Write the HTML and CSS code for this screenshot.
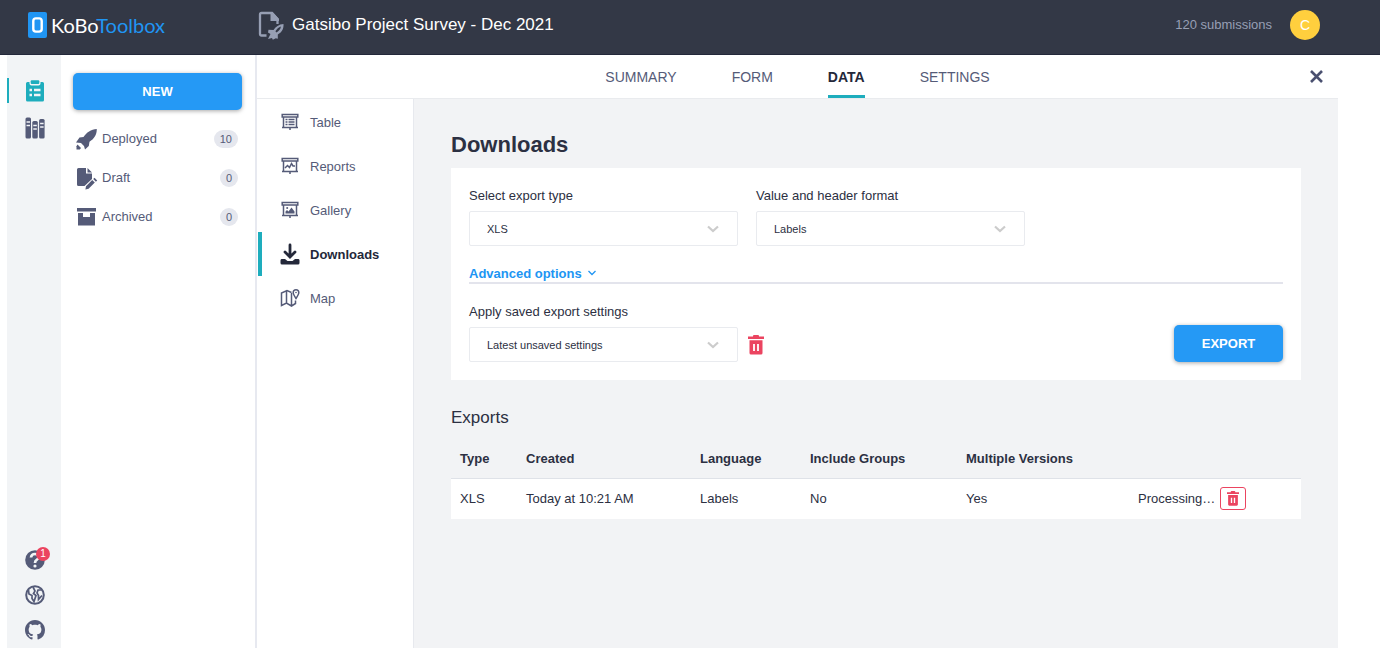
FILE: index.html
```html
<!DOCTYPE html>
<html lang="en">
<head>
    <meta charset="UTF-8">
    <meta name="viewport" content="width=device-width, initial-scale=1.0">
    <title>Gatsibo Project Survey - Dec 2021 | KoBoToolbox</title>
    <link rel="stylesheet" href="styles.css">
</head>
<body>

    <header class="header">
        <a href="#" class="brand">
            <svg width="20" height="28" viewBox="0 0 20 28">
                <rect x="0" y="1" width="19" height="26" rx="2" fill="#2095f3"/>
                <rect x="5.300" y="7.400" width="8.400" height="13.200" rx="2.600" fill="none" stroke="#fff" stroke-width="2.400"/>
            </svg>
            <span class="brand-text">KoBo<span>Toolbox</span></span>
        </a>
        <div class="project">
            <svg width="26" height="30" viewBox="0 0 26 30">
                <path d="M8.500 25.500H3.500Q2 25.500 2 24V4.500Q2 3 3.500 3H14l5.500 6v5" fill="none" stroke="#979fb4" stroke-width="2.300"/>
                <path d="M12.500 2h2l6.500 7v2h-8.500z" fill="#979fb4"/>
                <path d="M25.500 14c-4.500.3-8 2.800-10 6l-5-.2-.5 2.700 2.500 1.500-2.500 5 4-1 .8 1.800 3-1.500 2 .5v-4.300c4-2.200 6-5.500 5.700-10.500z" fill="#979fb4"/>
                <path d="M23 16.500c-2.300.8-4.300 2.500-5.600 4.700l1.200 1.200c2.200-1.300 3.800-3.200 4.400-5.900z" fill="#333846"/>
            </svg>
            <h1>Gatsibo Project Survey - Dec 2021</h1>
        </div>
        <span class="submissions">120 submissions</span>
        <button type="button" class="avatar">C</button>
    </header>

    <div class="layout">
        <nav class="rail">
            <a href="#" class="rail-link active" aria-label="Projects">
                <svg width="20" height="24" viewBox="0 0 20 24">
                    <path d="M2.500 3H4.500v1.500Q4.500 6.500 6.500 6.500h7q2 0 2-2V3h2q1.500 0 1.500 1.500v16.500q0 1.500-1.500 1.500h-15Q1 22.500 1 21V4.500Q1 3 2.500 3z" fill="currentColor"/>
                    <rect x="5.700" y="1.300" width="8.600" height="3.800" rx="1" fill="currentColor"/>
                    <path d="M4.500 11H7M4.500 16H7M9 11h6.500M9 16h6.500" stroke="#f2f4f6" stroke-width="2.300"/>
                </svg>
            </a>
            <a href="#" class="rail-link" aria-label="Library">
                <svg width="20" height="24" viewBox="0 0 20 24">
                    <rect x="0.500" y="1.500" width="5.500" height="21" rx="1.500" fill="currentColor"/>
                    <rect x="7.300" y="5" width="5.500" height="17.500" rx="1.500" fill="currentColor"/>
                    <rect x="14.100" y="3" width="5.500" height="19.500" rx="1.500" fill="currentColor"/>
                    <path d="M1.500 6h3.500M1.500 9.500h3.500M8.300 9.500h3.500M8.300 13h3.500M15.100 7.500h3.500M15.100 11h3.500" stroke="#f2f4f6" stroke-width="1.300"/>
                </svg>
            </a>
            <div class="rail-bottom">
                <button type="button" class="rail-btn" aria-label="Help">
                    <svg width="20" height="20" viewBox="0 0 20 20">
                        <circle cx="10" cy="10" r="9.800" fill="currentColor"/>
                        <path d="M6 7.500Q6.300 4 10 4q3.600 0 3.600 3 0 1.800-1.900 2.900Q10 10.900 10 13" fill="none" stroke="#f2f4f6" stroke-width="2.700"/>
                        <circle cx="10" cy="16" r="1.600" fill="#f2f4f6"/>
                    </svg>
                    <span class="alert-count">1</span>
                </button>
                <a href="#" class="rail-btn" aria-label="Website">
                    <svg width="20" height="20" viewBox="0 0 20 20" fill="none" stroke="currentColor">
                        <circle cx="10" cy="10" r="8.800" stroke-width="2"/>
                        <path d="M3.500 5l.5 4 3 1.500v3l2 3 2-6-2.500-2L10 6 8 2" stroke-width="1.700"/>
                        <path d="M16.500 5h-3.500l-1 3 1.500 2.500v4l3.500-4" stroke-width="1.700"/>
                    </svg>
                </a>
                <a href="#" class="rail-btn" aria-label="GitHub">
                    <svg width="20" height="20" viewBox="0 0 16 16" fill="currentColor">
                        <path d="M8 0C3.580 0 0 3.580 0 8c0 3.540 2.290 6.530 5.470 7.590.4.070.55-.17.55-.38 0-.19-.01-.82-.01-1.490-2.010.37-2.530-.49-2.690-.94-.09-.23-.48-.94-.82-1.130-.28-.15-.68-.52-.01-.53.63-.01 1.080.58 1.230.82.72 1.210 1.870.87 2.330.66.07-.52.28-.87.51-1.070-1.780-.2-3.640-.89-3.640-3.950 0-.87.31-1.590.82-2.150-.08-.2-.36-1.020.08-2.120 0 0 .67-.21 2.200.82.64-.18 1.320-.27 2-.27s1.360.09 2 .27c1.530-1.040 2.200-.82 2.200-.82.44 1.100.16 1.920.08 2.120.51.56.82 1.270.82 2.150 0 3.070-1.870 3.750-3.650 3.950.29.25.54.73.54 1.480 0 1.070-.01 1.930-.01 2.200 0 .21.15.46.55.38A8.010 8.010 0 0 0 16 8c0-4.420-3.580-8-8-8z"/>
                    </svg>
                </a>
            </div>
        </nav>

        <aside class="sidebar">
            <button type="button" class="btn btn-new">NEW</button>
            <ul class="status-list">
                <li>
                    <a href="#">
                        <svg width="22" height="24" viewBox="0 0 22 24" fill="currentColor">
                            <path d="M20.800 2C15 2.300 10.500 5.500 7.500 10L3.500 10.500 0 15.500l5 .5 3 3 1 3.500 3.800-3.500.7-4.300C18 12 20.800 8 20.800 2z"/>
                            <path d="M1.500 17.500l3.500 3.500L3.800 22.500H.5v-3.300z"/>
                        </svg>
                        Deployed
                    </a>
                    <span class="count">10</span>
                </li>
                <li>
                    <a href="#">
                        <svg width="22" height="24" viewBox="0 0 22 24" fill="currentColor">
                            <path d="M2.500 2H10v5.500h6V13l-7.500 7H2.500Q1 20 1 18.500v-15Q1 2 2.500 2z"/>
                            <path d="M11.500 2l4.500 4.500h-4.500z"/>
                            <path d="M10 20.200l6.200-6.200 2.600 2.600-6.200 6.200-3.200.6zM17.200 13l1.300-1.300 2.700 2.700-1.300 1.300z"/>
                        </svg>
                        Draft
                    </a>
                    <span class="count">0</span>
                </li>
                <li>
                    <a href="#">
                        <svg width="22" height="24" viewBox="0 0 22 24" fill="currentColor">
                            <path d="M1 3h19v3.500H1zM2 8h5v4h7V8h5v12.500H2z"/>
                        </svg>
                        Archived
                    </a>
                    <span class="count">0</span>
                </li>
            </ul>
        </aside>

        <main class="main">
            <div class="topbar">
                <nav class="tabs">
                    <a href="#">SUMMARY</a>
                    <a href="#">FORM</a>
                    <a href="#" class="active">DATA</a>
                    <a href="#">SETTINGS</a>
                </nav>
                <button type="button" class="close" aria-label="Close">
                    <svg width="13" height="13" viewBox="0 0 13 13">
                        <path d="M1 1l11 11M12 1L1 12" stroke="currentColor" stroke-width="2.600"/>
                    </svg>
                </button>
            </div>

            <div class="panel">
                <nav class="data-nav">
                    <a href="#">
                        <svg width="20" height="20" viewBox="0 0 20 20" fill="none" stroke="currentColor">
                            <path d="M2.200 2.500h15.600v2.500H2.200zM3.500 5v10.500h13V5M2 15.500h16M10 15.500v2.500" stroke-width="1.500"/>
                            <path d="M5.500 7.500h2M5.500 10h2M5.500 12.500h2M8.500 7.500h6M8.500 10h6M8.500 12.500h6" stroke-width="1.400"/>
                        </svg>
                        Table
                    </a>
                    <a href="#">
                        <svg width="20" height="20" viewBox="0 0 20 20" fill="none" stroke="currentColor">
                            <path d="M2.200 2.500h15.600v2.500H2.200zM3.500 5v10.500h13V5M2 15.500h16M10 15.500v2.500" stroke-width="1.500"/>
                            <path d="M5 12l2.500-2.500 2 2 2-4 1.500 2.500h2" stroke-width="1.500"/>
                        </svg>
                        Reports
                    </a>
                    <a href="#">
                        <svg width="20" height="20" viewBox="0 0 20 20" fill="none" stroke="currentColor">
                            <path d="M2.200 2.500h15.600v2.500H2.200zM3.500 5v10.500h13V5M2 15.500h16M10 15.500v2.500" stroke-width="1.500"/>
                            <path d="M5.500 13.500v-2L7 10l1.500 1.500 3-4 3 4v2z" fill="currentColor" stroke="none"/>
                            <circle cx="7.200" cy="8" r="1" fill="currentColor" stroke="none"/>
                        </svg>
                        Gallery
                    </a>
                    <a href="#" class="active">
                        <svg width="20" height="22" viewBox="0 0 20 22" fill="none" stroke="currentColor">
                            <path d="M10 2v11M5 9l5 5 5-5" stroke-width="2.800" stroke-linecap="round"/>
                            <path d="M1.500 16h3.500l2.500 2h5l2.500-2h3.500Q19.500 16 19.500 17.500v2.500Q19.500 21.500 18 21.500H2Q.5 21.500.5 20v-2.500Q.5 16 1.500 16z" fill="currentColor" stroke="none"/>
                        </svg>
                        Downloads
                    </a>
                    <a href="#">
                        <svg width="20" height="22" viewBox="0 0 20 22" fill="none" stroke="currentColor">
                            <path d="M11.500 5.500L7 3.500 1.500 6v12.500L6.500 16l5 3 4-2.500v-3M6.500 4v12M11.500 6v13" stroke-width="1.500"/>
                            <path d="M16 11.500c-2-3-2.800-4.500-2.800-6a2.800 2.800 0 0 1 5.600 0c0 1.500-.8 3-2.800 6z" stroke-width="1.500"/>
                            <circle cx="16" cy="5.500" r=".8" fill="currentColor" stroke="none"/>
                        </svg>
                        Map
                    </a>
                </nav>

                <section class="content">
                    <h2>Downloads</h2>
                    <form class="export-form">
                        <div class="fields">
                            <div class="field">
                                <label for="exportType">Select export type</label>
                                <div class="select">
                                    <select id="exportType">
                                        <option>XLS</option>
                                        <option>CSV</option>
                                    </select>
                                    <svg width="12" height="8" viewBox="0 0 12 8"><path d="M1 1.500l5 4.500 5-4.500" fill="none" stroke="#ccc" stroke-width="2.200"/></svg>
                                </div>
                            </div>
                            <div class="field">
                                <label for="valueFormat">Value and header format</label>
                                <div class="select">
                                    <select id="valueFormat">
                                        <option>Labels</option>
                                        <option>XML values and headers</option>
                                    </select>
                                    <svg width="12" height="8" viewBox="0 0 12 8"><path d="M1 1.500l5 4.500 5-4.500" fill="none" stroke="#ccc" stroke-width="2.200"/></svg>
                                </div>
                            </div>
                        </div>

                        <div class="advanced">
                            <button type="button">
                                Advanced options
                                <svg width="8" height="6" viewBox="0 0 8 6"><path d="M.5 1L4 4.500 7.500 1" fill="none" stroke="currentColor" stroke-width="1.300"/></svg>
                            </button>
                        </div>

                        <div class="form-bottom">
                            <div class="field">
                                <label for="savedSettings">Apply saved export settings</label>
                                <div class="select">
                                    <select id="savedSettings">
                                        <option>Latest unsaved settings</option>
                                    </select>
                                    <svg width="12" height="8" viewBox="0 0 12 8"><path d="M1 1.500l5 4.500 5-4.500" fill="none" stroke="#ccc" stroke-width="2.200"/></svg>
                                </div>
                            </div>
                            <button type="button" class="trash" aria-label="Delete settings">
                                <svg width="16" height="20" viewBox="0 0 16 20">
                                    <path d="M0 1.500h5V1q0-1 1-1h4q1 0 1 1v.5h5V4H0zM1.500 5.200h13v12.800q0 1.500-1.500 1.500H3q-1.500 0-1.500-1.500z" fill="currentColor"/>
                                    <path d="M6 9v7M10 9v7" stroke="#fff" stroke-width="1.800"/>
                                </svg>
                            </button>
                            <button type="submit" class="btn btn-export">EXPORT</button>
                        </div>
                    </form>

                    <h3>Exports</h3>
                    <table class="exports">
                        <thead>
                            <tr>
                                <th class="col-type">Type</th>
                                <th class="col-created">Created</th>
                                <th class="col-language">Language</th>
                                <th class="col-groups">Include Groups</th>
                                <th class="col-versions">Multiple Versions</th>
                                <th></th>
                            </tr>
                        </thead>
                        <tbody>
                            <tr>
                                <td>XLS</td>
                                <td>Today at 10:21 AM</td>
                                <td>Labels</td>
                                <td>No</td>
                                <td>Yes</td>
                                <td>
                                    <div class="row-actions">
                                        <span>Processing…</span>
                                        <button type="button" aria-label="Delete export">
                                            <svg width="12" height="15" viewBox="0 0 16 20">
                                                <path d="M0 1.500h5V1q0-1 1-1h4q1 0 1 1v.5h5V4H0zM1.500 5.200h13v12.800q0 1.500-1.500 1.500H3q-1.500 0-1.500-1.500z" fill="currentColor"/>
                                                <path d="M6 9v7M10 9v7" stroke="#fff" stroke-width="1.800"/>
                                            </svg>
                                        </button>
                                    </div>
                                </td>
                            </tr>
                        </tbody>
                    </table>
                </section>
            </div>
        </main>
    </div>

</body>
</html>
```

FILE: styles.css
```css
*{
    margin: 0;
    padding: 0;
    box-sizing: border-box;
}
body {
    display: flex;
    flex-direction: column;
    min-height: 100vh;
    font-family: "Liberation Sans", Arial, sans-serif;
    font-size: 13px;
    color: #2c3042;
    background-color: #fff;
}
button, select {
    font-family: inherit;
    cursor: pointer;
}
a {
    color: inherit;
    text-decoration: none;
}
svg {
    flex-shrink: 0;
}

/* header */
.header {
    display: flex;
    align-items: center;
    height: 55px;
    padding: 0 60px 5px 28px;
    background-color: #333846;
    border-bottom: 1px solid #23283a;
}
.brand {
    display: flex;
    align-items: center;
    gap: 3px;
    width: 230px;
}
.brand-text {
    font-family: Lato, "Open Sans", sans-serif;
    font-size: 20px;
    color: #fff;
}
.brand-text span {
    color: #2095f3;
}
.project {
    display: flex;
    align-items: center;
    gap: 8px;
    flex: 1;
    color: #fff;
}
.project h1 {
    font-size: 17px;
    font-weight: normal;
}
.submissions {
    color: #979fb4;
}
.avatar {
    width: 30px;
    height: 30px;
    margin-left: 18px;
    border: none;
    border-radius: 50%;
    background-color: #ffcf3e;
    color: #fff;
    font-size: 14px;
}

.layout {
    display: flex;
    flex: 1;
    padding: 0 42px 0 7px;
}

/* icon rail */
.rail {
    display: flex;
    flex-direction: column;
    width: 54px;
    padding: 23px 0 8px;
    background-color: #f2f4f6;
    color: #555b78;
}
.rail-link {
    display: flex;
    align-items: center;
    justify-content: center;
    height: 25px;
    margin-bottom: 12px;
    padding-left: 2px;
}
.rail-link.active {
    color: #1eadbd;
    padding-left: 0;
    border-left: 2px solid #1eadbd;
}
.rail-bottom {
    display: flex;
    flex-direction: column;
    align-items: center;
    gap: 15px;
    margin-top: auto;
    padding-left: 2px;
}
.rail-btn {
    position: relative;
    display: block;
    width: 20px;
    height: 20px;
    border: none;
    background: none;
    color: inherit;
}
.alert-count {
    position: absolute;
    top: -3px;
    right: -5px;
    width: 14px;
    height: 14px;
    border-radius: 50%;
    background-color: #eb4460;
    color: #fff;
    font-size: 10px;
    line-height: 14px;
}

/* sidebar */
.sidebar {
    width: 196px;
    padding: 18px 13px 0 12px;
    border-right: 2px solid #e7e9f0;
}
.btn {
    height: 37px;
    border: none;
    border-radius: 5px;
    background-color: #2599f5;
    box-shadow: 0 1px 4px rgba(0, 0, 0, 0.35);
    color: #fff;
    font-weight: bold;
}
.btn-new {
    width: 100%;
    font-size: 13px;
}
.status-list {
    list-style: none;
    padding: 9px 4px 0 3px;
}
.status-list li {
    display: flex;
    align-items: center;
    justify-content: space-between;
    height: 39px;
}
.status-list a {
    display: flex;
    align-items: center;
    gap: 4px;
    color: #555b78;
}
.count {
    min-width: 18px;
    padding: 0 6px;
    border-radius: 9px;
    background-color: #e5e7ee;
    color: #555b78;
    font-size: 11px;
    line-height: 18px;
    text-align: center;
}

/* main */
.main {
    display: flex;
    flex-direction: column;
    flex: 1;
}
.topbar {
    display: flex;
    height: 44px;
    padding: 0 15px 0 28px;
    border-bottom: 1px solid #e9ebee;
}
.tabs {
    display: flex;
    justify-content: center;
    gap: 55px;
    flex: 1;
    font-size: 14px;
    color: #555b78;
}
.tabs a {
    line-height: 44px;
}
.tabs .active {
    border-bottom: 3px solid #1eadbd;
    color: #24283a;
    font-weight: bold;
}
.close {
    padding-top: 2px;
    border: none;
    background: none;
    color: #4a5070;
}
.panel {
    display: flex;
    flex: 1;
}
.data-nav {
    width: 157px;
    padding: 1px 0 0 1px;
    border-right: 1px solid #e7e9ee;
    color: #555b78;
}
.data-nav a {
    display: flex;
    align-items: center;
    gap: 10px;
    height: 44px;
    padding-left: 18px;
    border-left: 4px solid transparent;
}
.data-nav .active {
    border-left-color: #1eadbd;
    color: #24283a;
    font-weight: bold;
}

/* downloads */
.content {
    flex: 1;
    padding: 33px 37px;
    background-color: #f2f3f5;
}
.content h2 {
    font-size: 22px;
    line-height: 26px;
    margin-bottom: 10px;
}
.export-form {
    padding: 20px 18px 18px;
    background-color: #fff;
}
.fields {
    display: flex;
    gap: 18px;
}
.field {
    width: 269px;
}
.field label {
    display: block;
    line-height: 16px;
    margin-bottom: 7px;
}
.select {
    position: relative;
}
.select select {
    display: block;
    width: 100%;
    height: 35px;
    padding: 0 17px;
    appearance: none;
    border: 1px solid #e9ebef;
    border-radius: 2px;
    background-color: #fff;
    color: #2c3042;
    font-size: 11px;
}
.select svg {
    position: absolute;
    top: 14px;
    right: 19px;
    pointer-events: none;
}
.advanced {
    margin-top: 18px;
    border-bottom: 2px solid #e3e4ec;
}
.advanced button {
    display: flex;
    align-items: center;
    gap: 6px;
    height: 18px;
    border: none;
    background: none;
    color: #2095f3;
    font-size: 13px;
    font-weight: bold;
}
.form-bottom {
    display: flex;
    align-items: flex-end;
    margin-top: 20px;
}
.trash {
    height: 35px;
    margin-left: 10px;
    border: none;
    background: none;
    color: #eb4460;
}
.trash svg {
    display: block;
}
.btn-export {
    width: 109px;
    margin-left: auto;
    font-size: 13px;
}
.content h3 {
    margin: 28px 0 12px;
    font-size: 17px;
    line-height: 20px;
    font-weight: normal;
}
.exports {
    width: 100%;
    table-layout: fixed;
    border-collapse: collapse;
}
.exports th, .exports td {
    height: 41px;
    padding: 0 9px;
    text-align: left;
}
.exports th {
    height: 38px;
}
.exports thead {
    border-bottom: 1px solid #dfe2e8;
}
.exports tbody {
    background-color: #fff;
}
.col-type {
    width: 66px;
}
.col-created {
    width: 174px;
}
.col-language {
    width: 110px;
}
.col-groups {
    width: 156px;
}
.col-versions {
    width: 172px;
}
.row-actions {
    display: flex;
    align-items: center;
    gap: 5px;
}
.row-actions button {
    display: flex;
    align-items: center;
    justify-content: center;
    width: 26px;
    height: 23px;
    border: 1px solid #eb4460;
    border-radius: 3px;
    background-color: #fff;
    color: #eb4460;
}
```
